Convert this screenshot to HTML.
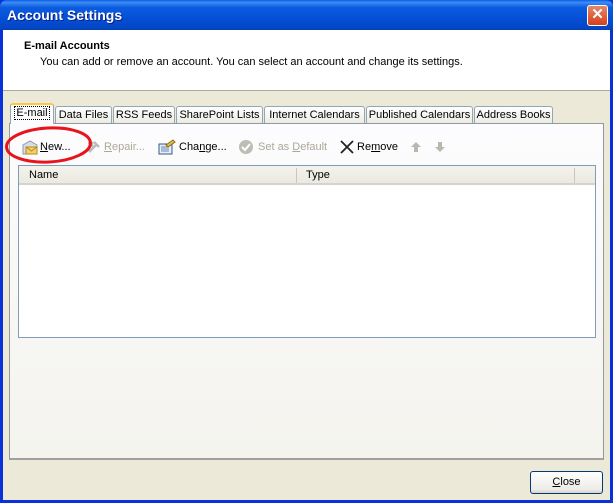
<!DOCTYPE html>
<html><head><style>
*{margin:0;padding:0;box-sizing:border-box}
body{width:613px;height:503px;position:relative;overflow:hidden;font-family:"Liberation Sans",Arial,sans-serif;font-size:11px;color:#000;background:#0831d9}
.abs{position:absolute}
#title{left:0;top:0;width:613px;height:30px;background:linear-gradient(#0a5ce8 0%,#3d8df5 8%,#0b5be0 25%,#0450d6 60%,#0447c7 90%,#0340b8 100%);border-radius:7px 7px 0 0}
#title span{position:absolute;left:7px;top:7px;color:#fff;font-weight:bold;font-size:14px;text-shadow:1px 1px #0a1e80}
#x{left:587px;top:5px;width:21px;height:21px;border:1px solid #fff;border-radius:3px;background:linear-gradient(#e8866a,#d4411a);color:#fff;font-size:15px;font-weight:bold;text-align:center;line-height:18px}
#client{left:3px;top:30px;width:607px;height:470px;background:#ece9d8}
#hdr{left:3px;top:30px;width:607px;height:61px;background:#fff;border-bottom:1px solid #aca899}
.tab{position:absolute;top:106px;height:17px;border:1px solid #91a7b4;border-bottom:none;border-radius:3px 3px 0 0;background:linear-gradient(#fff,#ecebe5);line-height:16px;font-size:11px;white-space:nowrap;text-align:center}
#panel{left:9px;top:123px;width:595px;height:337px;border:1px solid #919b9c;border-bottom:2px solid #a0a0a0;background:linear-gradient(#fcfcfe,#f4f3ee)}
.tb{position:absolute;top:141px;font-size:11px;white-space:nowrap}
.dis{color:#aca899}
#list{left:18px;top:165px;width:578px;height:173px;background:#fff;border:1px solid #7f9db9}
#lh{left:19px;top:166px;width:576px;height:19px;background:linear-gradient(#f3f2ec,#ebeae1);border-bottom:2px solid #d6d3ce}
#close{left:530px;top:471px;width:73px;height:23px;border:1px solid #003c74;border-radius:3px;background:linear-gradient(#fff,#ecebe6 85%,#d6d0c5);text-align:center;line-height:21px}
u{text-decoration:underline}
</style></head><body>
<div id="title" class="abs"><span>Account Settings</span></div>
<div id="x" class="abs">✕</div>
<div id="client" class="abs"></div>
<div id="hdr" class="abs"></div>
<div class="abs" style="left:24px;top:40px;font-weight:bold">E-mail Accounts</div>
<div class="abs" style="left:40px;top:56px">You can add or remove an account. You can select an account and change its settings.</div>
<div id="panel" class="abs"></div>
<div class="tab" style="left:10px;top:103px;width:44px;height:21px;background:#fcfcfe;border-top:2px solid #ffc83c;line-height:17px;z-index:2"><span style="outline:1px dotted #000;padding:0 1px">E-mail</span></div>
<div class="tab" style="left:55px;width:57px">Data Files</div>
<div class="tab" style="left:113px;width:62px">RSS Feeds</div>
<div class="tab" style="left:176px;width:87px">SharePoint Lists</div>
<div class="tab" style="left:264px;width:101px">Internet Calendars</div>
<div class="tab" style="left:366px;width:107px">Published Calendars</div>
<div class="tab" style="left:474px;width:79px">Address Books</div>

<svg class="abs" style="left:21px;top:139px" width="18" height="17"><path d="M2 6 L9 2 L16 6 L16 15 L2 15Z" fill="#d8dde6" stroke="#8a9aae"/><rect x="5" y="8" width="11" height="7" fill="#f3d26a" stroke="#b08a20"/><path d="M5 8 L10.5 12 L16 8" fill="none" stroke="#b08a20"/></svg>
<div class="tb" style="left:40px"><u>N</u>ew...</div>
<svg class="abs" style="left:86px;top:139px" width="16" height="16"><path d="M3 13 L10 6 M8 3 L13 8 M2 4 L6 4 L6 8" stroke="#bbb" stroke-width="2.5" fill="none"/></svg>
<div class="tb dis" style="left:104px"><u>R</u>epair...</div>
<svg class="abs" style="left:158px;top:139px" width="18" height="16"><rect x="1" y="5" width="13" height="10" fill="#e8eef8" stroke="#36588a"/><path d="M3 8h8M3 10h8M3 12h8" stroke="#6b87b5"/><path d="M8 6 L15 1 L17 3 L10 8Z" fill="#e6c24a" stroke="#8a6a10"/></svg>
<div class="tb" style="left:179px">Cha<u>n</u>ge...</div>
<svg class="abs" style="left:238px;top:139px" width="16" height="16"><circle cx="8" cy="8" r="7" fill="#bdbdb5"/><path d="M4 8 L7 11 L12 5" stroke="#fff" stroke-width="2" fill="none"/></svg>
<div class="tb dis" style="left:258px">Set as <u>D</u>efault</div>
<svg class="abs" style="left:340px;top:140px" width="14" height="14"><path d="M1 1 L13 13 M13 1 L1 13" stroke="#222" stroke-width="1.8"/></svg>
<div class="tb" style="left:357px">Re<u>m</u>ove</div>
<svg class="abs" style="left:410px;top:141px" width="12" height="12"><path d="M6 1 L11 6 L8 6 L8 11 L4 11 L4 6 L1 6Z" fill="#b8b8b0"/></svg>
<svg class="abs" style="left:434px;top:141px" width="12" height="12"><path d="M6 11 L11 6 L8 6 L8 1 L4 1 L4 6 L1 6Z" fill="#b8b8b0"/></svg>
<svg class="abs" style="left:3px;top:124px" width="92" height="42"><ellipse cx="45.5" cy="21" rx="42" ry="17" fill="none" stroke="#e8141c" stroke-width="3" transform="rotate(-3 45 21)"/></svg>

<div id="list" class="abs"></div>
<div id="lh" class="abs"></div>
<div class="abs" style="left:29px;top:169px">Name</div>
<div class="abs" style="left:296px;top:168px;width:1px;height:15px;background:#cbc7b8"></div>
<div class="abs" style="left:306px;top:169px">Type</div>
<div class="abs" style="left:574px;top:168px;width:1px;height:15px;background:#cbc7b8"></div>
<div id="close" class="abs"><u>C</u>lose</div>
</body></html>
